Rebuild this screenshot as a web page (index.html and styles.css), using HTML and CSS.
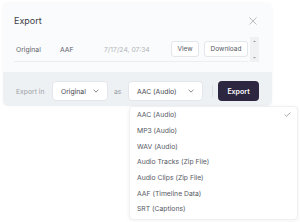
FILE: index.html
```html
<!DOCTYPE html>
<html>
<head>
<meta charset="utf-8">
<link rel="stylesheet" href="styles.css">
</head>
<body>
<div class="dialog">
  <div class="header">
    <div class="title">Export</div>
    <svg class="close" width="8" height="8" viewBox="0 0 8 8"><path d="M0.5 0.5L7.5 7.5M7.5 0.5L0.5 7.5" stroke="#a9adb3" stroke-width="0.8" fill="none"/></svg>
  </div>
  <div class="list">
    <div class="row">
      <span class="c-name">Original</span>
      <span class="c-type">AAF</span>
      <span class="c-date">7/17/24, 07:34</span>
      <span class="btn btn-view">View</span>
      <span class="btn btn-dl">Download</span>
    </div>
    <div class="scrollbar">
      <svg width="9" height="25" viewBox="0 0 9 25"><path d="M3 5L4.5 3.5L6 5Z" fill="#9a9ea4"/><path d="M3 20L4.5 21.5L6 20Z" fill="#9a9ea4"/></svg>
    </div>
  </div>
  <div class="footer">
    <span class="label">Export in</span>
    <div class="select sel-orig"><span>Original</span><svg class="chev" width="6" height="4" viewBox="0 0 6 4"><path d="M0.6 0.8L3 3.1L5.4 0.8" stroke="#6b6f76" stroke-width="0.8" fill="none"/></svg></div>
    <span class="label as">as</span>
    <div class="select sel-fmt"><span>AAC (Audio)</span><svg class="chev" width="6" height="4" viewBox="0 0 6 4"><path d="M0.6 0.8L3 3.1L5.4 0.8" stroke="#6b6f76" stroke-width="0.8" fill="none"/></svg></div>
    <span class="sep"></span>
    <div class="export-btn">Export</div>
  </div>
</div>
<div class="menu">
  <div class="item">AAC (Audio)<svg class="check" width="7" height="5" viewBox="0 0 7 5"><path d="M0.6 2.6L2.4 4.3L6.4 0.6" stroke="#8e9298" stroke-width="0.8" fill="none"/></svg></div>
  <div class="item">MP3 (Audio)</div>
  <div class="item">WAV (Audio)</div>
  <div class="item">Audio Tracks (Zip File)</div>
  <div class="item">Audio Clips (Zip File)</div>
  <div class="item">AAF (Timeline Data)</div>
  <div class="item">SRT (Captions)</div>
</div>
</body>
</html>
```

FILE: styles.css
```css
html, body {
  margin: 0;
  padding: 0;
  background: #ffffff;
  width: 300px;
  height: 222px;
  overflow: hidden;
  position: relative;
  font-family: Inter, "Noto Sans", sans-serif;
  font-size: 6.8px;
  color: #55595f;
}
.dialog {
  margin: 3px 0 0 3px;
  width: 269px;
  background: #fafbfc;
  border-radius: 5px;
  box-shadow: 0 0 3px rgba(0,0,0,0.04);
  overflow: hidden;
}
.header {
  display: flex;
  align-items: center;
  justify-content: space-between;
  padding: 11px 15px 0 11px;
  height: 14px;
}
.title {
  font-size: 9px;
  line-height: 14px;
  color: #3d4046;
}
.close { display: block; }
.list {
  display: flex;
  margin: 9px 13px 0 11px;
}
.row {
  flex: 1;
  display: flex;
  align-items: center;
  padding: 4px 0 4px 2px;
  border-bottom: 1px solid #eceef1;
  height: 16px;
}
.c-name { width: 44px; color: #5f636a; }
.c-type { width: 44px; color: #5f636a; }
.c-date { flex: 1; color: #b2b5ba; }
.btn {
  box-sizing: border-box;
  height: 16px;
  display: flex;
  align-items: center;
  justify-content: center;
  background: #fff;
  border: 1px solid #e3e6ea;
  border-radius: 3px;
  color: #55595f;
  font-size: 6.5px;
}
.btn-view { width: 28px; }
.btn-dl { width: 44px; margin-left: 5px; }
.scrollbar {
  width: 9px;
  height: 25px;
  margin-left: 2px;
  background: #f0f1f3;
}
.scrollbar svg { display: block; }
.footer {
  margin-top: 10px;
  background: #eef1f4;
  display: flex;
  align-items: center;
  padding: 9px 13px 5px 13px;
  height: 20px;
}
.label { color: #9a9ea5; width: 36px; }
.label.as { width: 8px; margin: 0 6px; }
.select {
  box-sizing: border-box;
  height: 20px;
  background: #fff;
  border: 1px solid #e3e6ea;
  border-radius: 4px;
  display: flex;
  align-items: center;
  justify-content: space-between;
  padding: 0 8px 0 8px;
  color: #45484e;
}
.sel-orig { width: 56px; }
.sel-fmt { width: 75px; }
.chev { display: block; }
.sep {
  width: 1px;
  height: 12px;
  background: #dde0e4;
  margin: 0 5px 0 9px;
}
.export-btn {
  width: 41px;
  height: 20px;
  border-radius: 4px;
  background: #2c2640;
  color: #fff;
  font-weight: 600;
  font-size: 7px;
  display: flex;
  align-items: center;
  justify-content: center;
}
.menu {
  position: absolute;
  left: 129px;
  top: 106px;
  width: 169px;
  height: 114px;
  box-sizing: border-box;
  background: #fff;
  border: 1px solid #eef0f2;
  border-radius: 4px;
  box-shadow: 0 1px 4px rgba(0,0,0,0.05);
}
.item {
  height: 15.7px;
  display: flex;
  align-items: center;
  justify-content: space-between;
  padding: 0 6px 0 7px;
  color: #55595f;
}
.check { display: block; }
```
